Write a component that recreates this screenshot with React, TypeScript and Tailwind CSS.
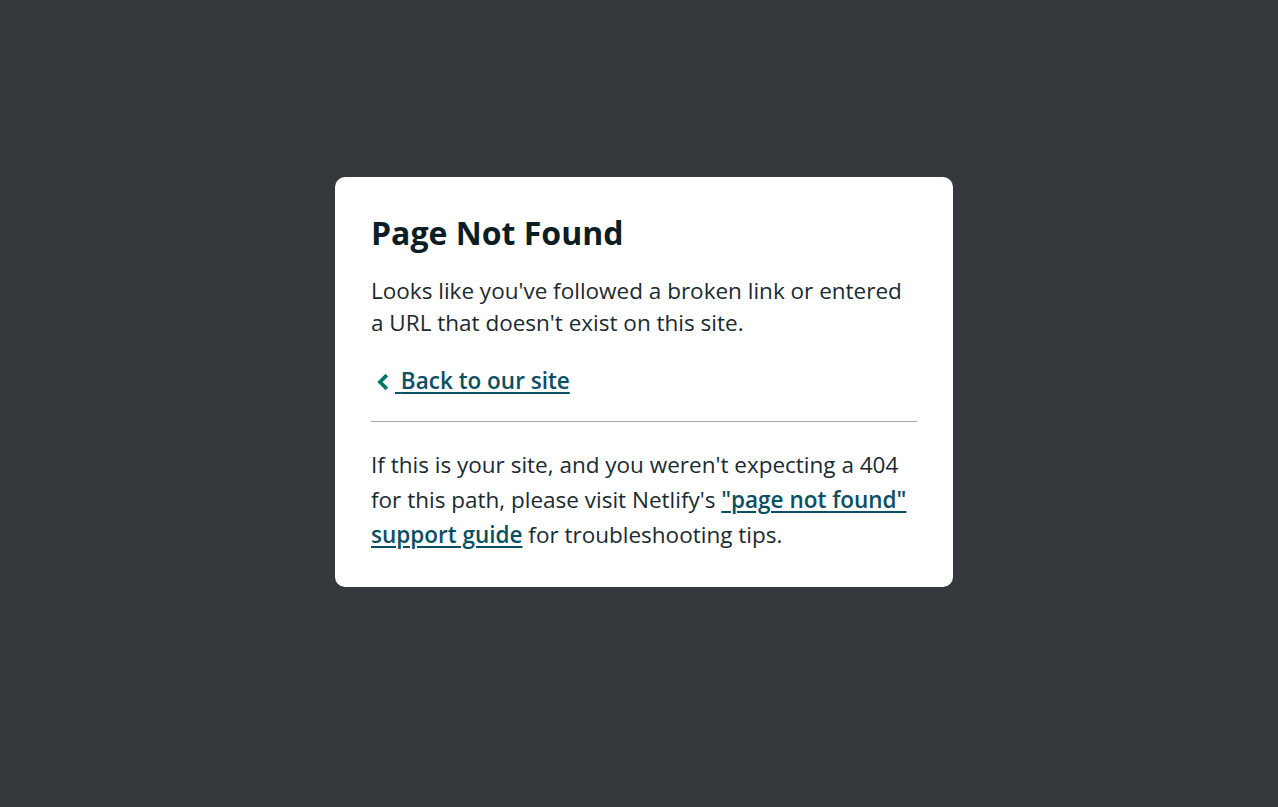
import React from "react";

export default function App() {
  return (
    <div
      className="min-h-screen bg-[#35383d] flex justify-center pt-[177px] pl-[10px]"
      style={{ fontFamily: '"Open Sans", "Noto Sans", sans-serif' }}
    >
      <div className="w-[618px] h-[410px] bg-white rounded-[10px] px-9 pt-9">
        <h1 className="text-[32px] leading-10 font-bold text-[#0d1d24]">
          Page Not Found
        </h1>
        <p className="mt-[22px] text-[22.5px] leading-8 text-[#1b2a30]">
          Looks like you've followed a broken link or entered a URL that
          doesn't exist on this site.
        </p>
        <p className="mt-[26px] text-[22.5px] leading-8">
          <a
            href="#"
            className="text-[#0b4f64] font-semibold underline decoration-2 underline-offset-[3px]"
          >
            <svg
              width="13"
              height="16"
              viewBox="0 0 13 16"
              className="inline-block align-[-1px] ml-[5px] mr-[6px]"
            >
              <path
                d="M9.5 2.5 L4 8 L9.5 13.5"
                fill="none"
                stroke="#00786b"
                strokeWidth="3.8"
                strokeLinecap="square"
              />
            </svg>{" "}
            Back to our site
          </a>
        </p>
        <hr className="mt-6 border-0 h-px bg-[#a3a3a3]" />
        <p className="mt-[25px] text-[22.5px] leading-[35px] text-[#1b2a30]">
          If this is your site, and you weren't expecting a 404 for this path,
          please visit Netlify's{" "}
          <a
            href="#"
            className="text-[#0b4f64] font-semibold underline decoration-2 underline-offset-[3px]"
          >
            "page not found" support guide
          </a>{" "}
          for troubleshooting tips.
        </p>
      </div>
    </div>
  );
}
